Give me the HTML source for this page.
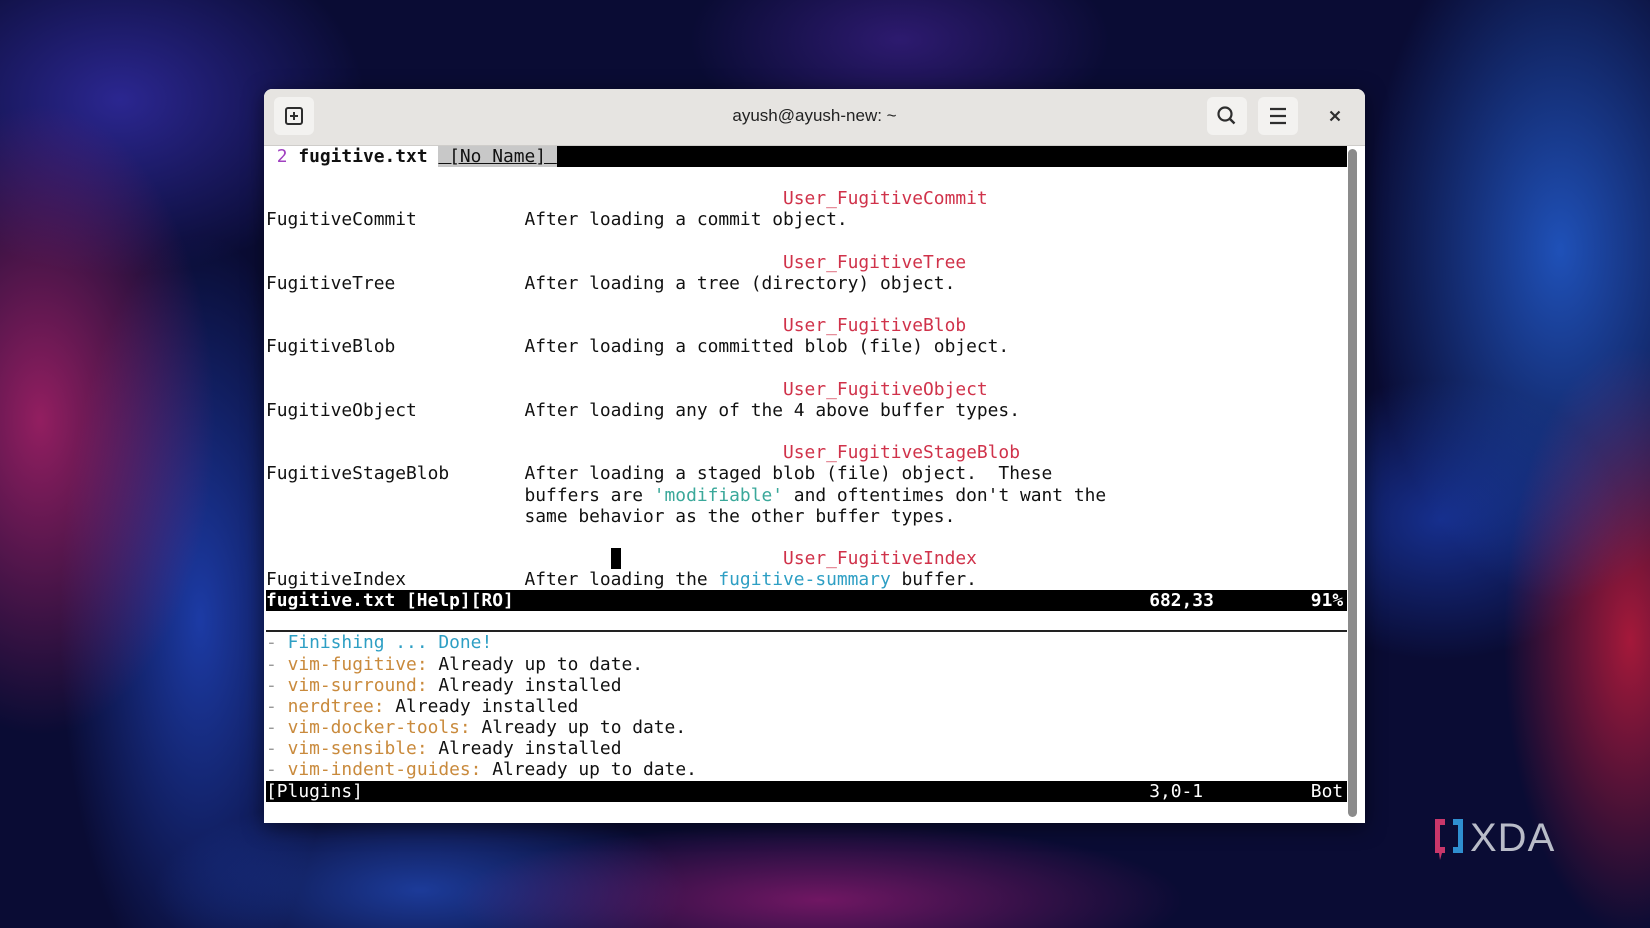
<!DOCTYPE html>
<html><head><meta charset="utf-8">
<style>
html,body{margin:0;padding:0}
body{width:1650px;height:928px;overflow:hidden;position:relative;
background:
radial-gradient(ellipse 250px 450px at 40px 420px, rgba(220,40,120,0.65), transparent 70%),
radial-gradient(ellipse 200px 550px at 200px 620px, rgba(40,90,240,0.6), transparent 70%),
radial-gradient(ellipse 350px 250px at 120px 100px, rgba(70,60,220,0.55), transparent 70%),
radial-gradient(ellipse 300px 150px at 900px 40px, rgba(80,40,170,0.5), transparent 70%),
radial-gradient(ellipse 280px 500px at 1560px 250px, rgba(40,110,240,0.7), transparent 70%),
radial-gradient(ellipse 180px 420px at 1630px 640px, rgba(230,30,60,0.7), transparent 70%),
radial-gradient(ellipse 260px 200px at 1440px 520px, rgba(30,70,200,0.6), transparent 70%),
radial-gradient(ellipse 520px 110px at 820px 900px, rgba(180,30,130,0.6), transparent 70%),
radial-gradient(ellipse 380px 140px at 420px 890px, rgba(40,90,220,0.6), transparent 70%),
#0a0c34;}
.win{position:absolute;left:264px;top:89px;width:1101px;height:734px;background:#fff;border-radius:8px 8px 0 0;overflow:hidden;box-shadow:0 4px 20px rgba(0,0,0,0.5)}
.hdr{position:absolute;left:0;top:0;width:100%;height:56px;background:#e6e4e1;border-bottom:1px solid #cfcdca}
.btn{position:absolute;top:8px;width:40px;height:38px;border-radius:6px;background:#f3f2f0}
.title{position:absolute;left:0;width:100%;top:17px;text-align:center;font:17px "Liberation Sans",sans-serif;color:#222}
pre{position:absolute;left:2px;top:57px;margin:0;width:1081px;overflow:hidden;font:17.9px/21.15px "DejaVu Sans Mono","Liberation Mono",monospace;color:#111;white-space:pre}
.r{color:#d0324a}.c{color:#2e9fc4}.g{color:#3aa89a}.o{color:#c98a3c}.d{color:#999}
.bar{background:#000;color:#fff;display:block}
.sb{position:absolute;left:1084px;top:60px;width:9px;height:668px;border-radius:5px;background:#8b8b8b}
</style></head><body>
<div class="win">
 <div class="hdr">
  <div class="btn" style="left:10px"><svg width="40" height="38" viewBox="0 0 40 38"><rect x="12" y="11" width="16" height="16" rx="2" fill="none" stroke="#2e2e2e" stroke-width="2"/><path d="M20 15v8M16 19h8" stroke="#2e2e2e" stroke-width="2"/></svg></div>
  <div class="title">ayush@ayush-new: ~</div>
  <div class="btn" style="left:943px"><svg width="40" height="38" viewBox="0 0 40 38"><circle cx="18" cy="17" r="6.5" fill="none" stroke="#2e2e2e" stroke-width="2.2"/><path d="M22.5 21.5l5 5" stroke="#2e2e2e" stroke-width="2.4"/></svg></div>
  <div class="btn" style="left:994px"><svg width="40" height="38" viewBox="0 0 40 38"><path d="M12 12h16M12 19h16M12 26h16" stroke="#2e2e2e" stroke-width="2.2"/></svg></div>
  <svg style="position:absolute;left:1063px;top:19px" width="16" height="16" viewBox="0 0 16 16"><path d="M3.5 3.5l9 9M12.5 3.5l-9 9" stroke="#2e2e2e" stroke-width="2.2"/></svg>
 </div>
<pre> <span style="color:#a040c0">2</span><b> fugitive.txt </b><span style="background:#c8c8c8;text-decoration:underline"> [No Name] </span><span style="background:#000">                                                                          </span>

                                                <span class="r">User_FugitiveCommit</span>
FugitiveCommit          After loading a commit object.

                                                <span class="r">User_FugitiveTree</span>
FugitiveTree            After loading a tree (directory) object.

                                                <span class="r">User_FugitiveBlob</span>
FugitiveBlob            After loading a committed blob (file) object.

                                                <span class="r">User_FugitiveObject</span>
FugitiveObject          After loading any of the 4 above buffer types.

                                                <span class="r">User_FugitiveStageBlob</span>
FugitiveStageBlob       After loading a staged blob (file) object.  These
                        buffers are <span class="g">'modifiable'</span> and oftentimes don't want the
                        same behavior as the other buffer types.

                                <span style="background:#000"> </span>               <span class="r">User_FugitiveIndex</span>
FugitiveIndex           After loading the <span class="c">fugitive-summary</span> buffer.
<b class="bar">fugitive.txt [Help][RO]                                                           682,33         91%</b><span style="display:block;border-bottom:2px solid #222;height:19px"> </span><span class="d">-</span> <span class="c">Finishing ... Done!</span>
<span class="d">-</span> <span class="o">vim-fugitive:</span> Already up to date.
<span class="d">-</span> <span class="o">vim-surround:</span> Already installed
<span class="d">-</span> <span class="o">nerdtree:</span> Already installed
<span class="d">-</span> <span class="o">vim-docker-tools:</span> Already up to date.
<span class="d">-</span> <span class="o">vim-sensible:</span> Already installed
<span class="d">-</span> <span class="o">vim-indent-guides:</span> Already up to date.
<span class="bar">[Plugins]                                                                         3,0-1          Bot</span></pre>
 <div class="sb"></div>
</div>
<svg style="position:absolute;left:1433px;top:816px" width="160" height="46" viewBox="0 0 160 46">
 <path d="M2 3h10v6H7v22h5v6H9l-2 7-1-7H2z" fill="#c8376a"/>
 <path d="M20 3h10v34H20v-6h5V9h-5z" fill="#2f8fd0"/>
 <text x="37" y="35" font-family="Liberation Sans,sans-serif" font-size="40" fill="#b9bcc8" letter-spacing="1">XDA</text>
</svg>
</body></html>
